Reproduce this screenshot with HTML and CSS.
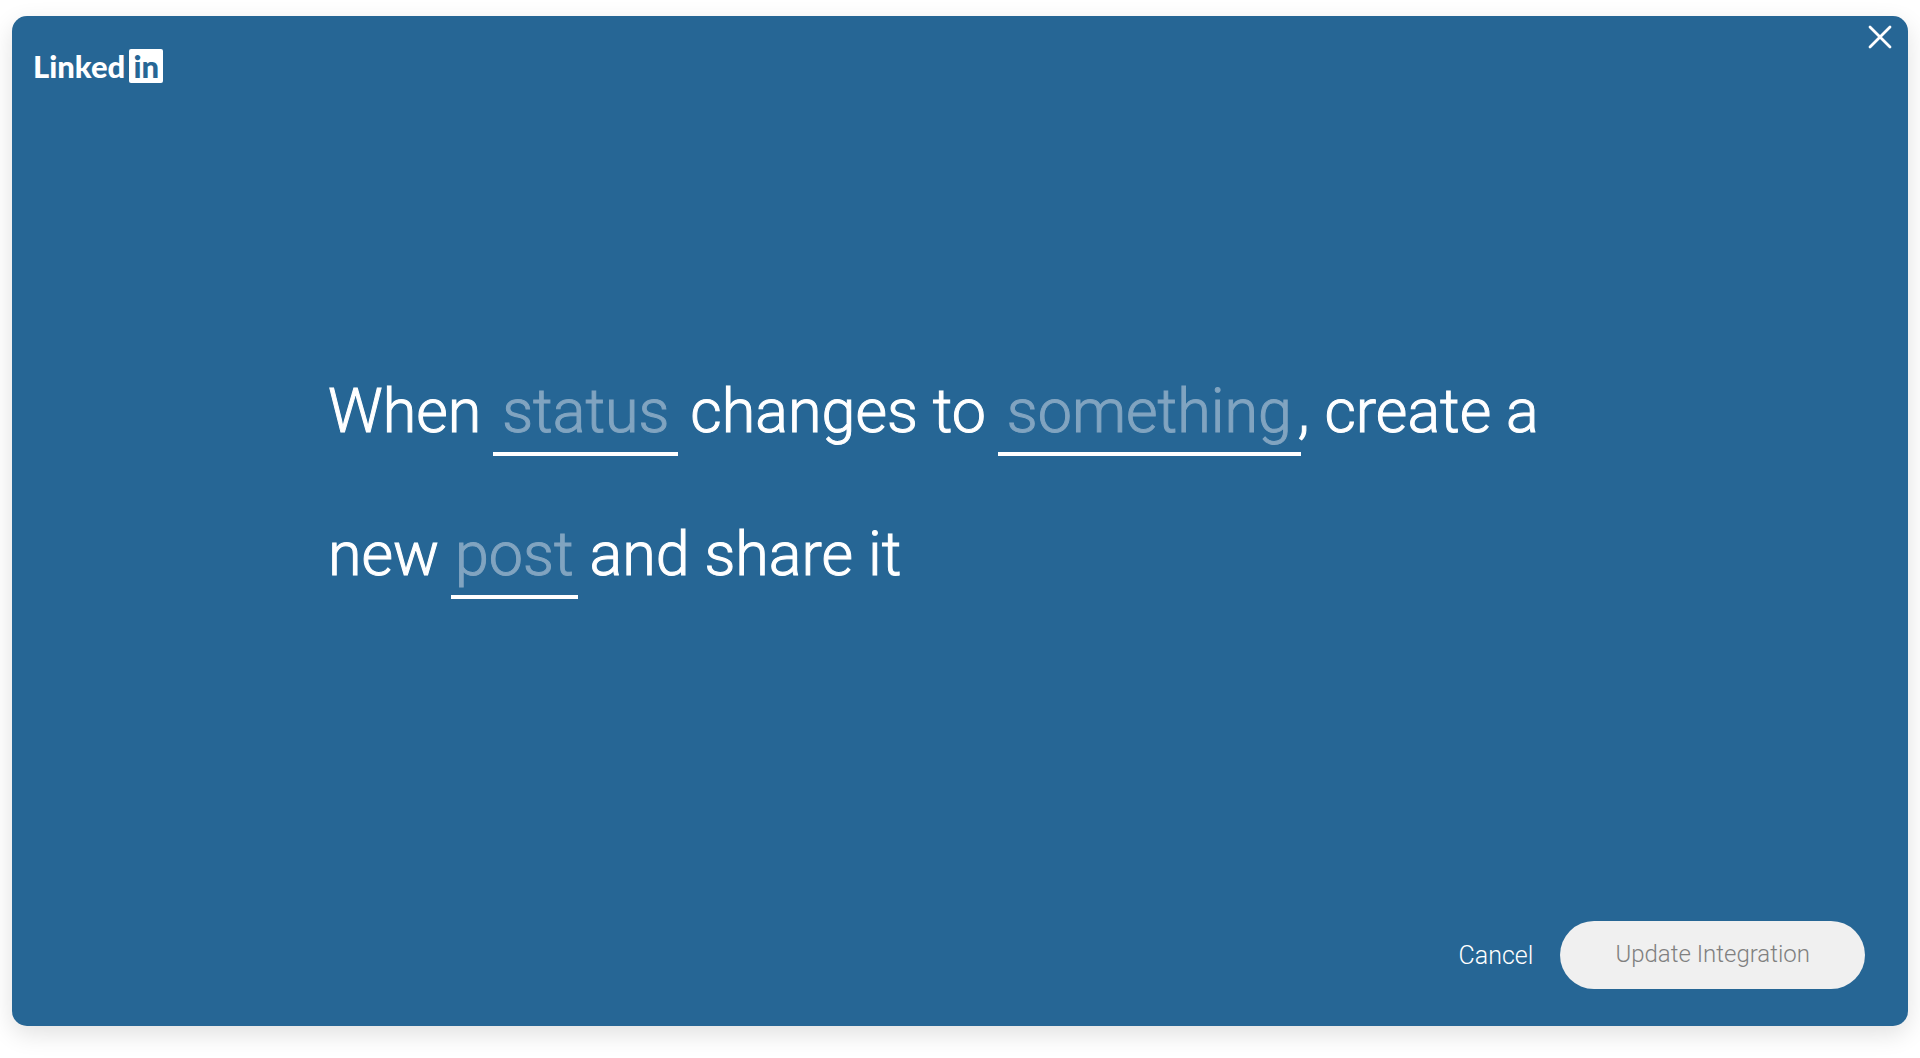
FILE: index.html
```html
<!DOCTYPE html>
<html lang="en">
<head>
  <meta charset="UTF-8">
  <meta name="viewport" content="width=device-width, initial-scale=1.0">
  <title>LinkedIn Integration</title>
  <link rel="stylesheet" href="styles.css">
</head>
<body>
  <section class="dialog">
    <header class="dialog-header">
      <a href="#" class="logo"><span class="logo-word">Linked</span><span class="logo-box">in</span></a>
      <button type="button" class="close-btn" aria-label="Close">
        <svg width="24" height="24" viewBox="0 0 24 24">
          <path d="M2 2L22 22M22 2L2 22" fill="none" stroke="#fff" stroke-width="2.8" stroke-linecap="round"/>
        </svg>
      </button>
    </header>

    <main class="recipe">
      <p class="sentence">
        <span>When</span> <button type="button" class="blank">status</button> <span>changes to</span> <button type="button" class="blank">something</button><span>, create a</span> <span>new</span> <button type="button" class="blank blank-entity">post</button> <span>and share it</span>
      </p>
    </main>

    <footer class="dialog-footer">
      <button type="button" class="cancel-btn">Cancel</button>
      <button type="button" class="update-btn" disabled>Update Integration</button>
    </footer>
  </section>
</body>
</html>
```
FILE: styles.css
```css
* {
  box-sizing: border-box;
}
body {
  margin: 0;
  padding: 16px 12px 32px;
  min-height: 100vh;
  display: flex;
  background-color: #fff;
  font-family: Roboto, sans-serif;
  font-weight: 300;
}
button {
  font: inherit;
  border: none;
  background: none;
  padding: 0;
  cursor: pointer;
}
.dialog {
  flex: 1;
  display: flex;
  flex-direction: column;
  background-color: #266695;
  border-radius: 15px;
  box-shadow: 0 8px 24px rgba(0, 0, 0, 0.12);
  color: #fff;
}
.dialog-header {
  display: flex;
  justify-content: space-between;
  align-items: flex-start;
  padding: 9px 16px 0 21px;
}
.logo {
  display: flex;
  gap: 4px;
  margin-top: 24px;
  color: #fff;
  font-family: Lato, sans-serif;
  font-weight: 900;
  font-size: 31px;
  line-height: 34px;
  text-decoration: none;
}
.logo-box {
  width: 34px;
  height: 34px;
  border-radius: 2px;
  background-color: #fff;
  color: #266695;
  text-align: center;
}
.close-btn svg {
  display: block;
}
.recipe {
  flex: 1;
  display: flex;
  flex-direction: column;
  justify-content: center;
  padding: 0 316px;
}
.sentence {
  margin: 0;
  font-size: 61px;
  line-height: 143px;
  -webkit-text-stroke-width: 1px;
}
.blank {
  margin: 0 -3px;
  padding: 0 9px;
  border-bottom: 4px solid #fff;
  color: #81a4c0;
  line-height: 82px;
}
.blank-entity {
  padding: 0 4px;
}
.dialog-footer {
  display: flex;
  justify-content: flex-end;
  align-items: center;
  gap: 27px;
  padding: 38px 43px 37px;
}
.cancel-btn {
  color: #fff;
  font-size: 25px;
}
.update-btn {
  height: 68px;
  padding: 0 55px 2px;
  border-radius: 34px;
  background-color: #f0f0f0;
  color: #808080;
  font-size: 24px;
  cursor: default;
}
```
